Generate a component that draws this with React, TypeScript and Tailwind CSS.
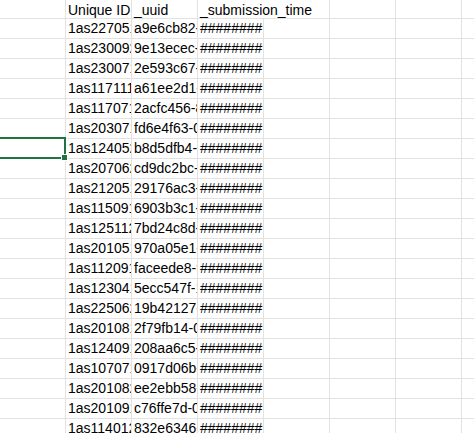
const rows: [string, string][] = [
  ["1as227051a", "a9e6cb82-4f1d"],
  ["1as230092a", "9e13ecec-7b21"],
  ["1as230071b", "2e593c67-1a0e"],
  ["1as117111a", "a61ee2d1-5c3b"],
  ["1as117071c", "2acfc456-8e90"],
  ["1as203071a", "fd6e4f63-0d2a"],
  ["1as124052b", "b8d5dfb4-3f17"],
  ["1as207062a", "cd9dc2bc-9e44"],
  ["1as212051a", "29176ac3-6b08"],
  ["1as115091b", "6903b3c1-2d55"],
  ["1as125112a", "7bd24c8d-4a19"],
  ["1as201051c", "970a05e1-8c6f"],
  ["1as112091a", "faceede8-9d02"],
  ["1as123041b", "5ecc547f-1e3a"],
  ["1as225062a", "19b42127-7f80"],
  ["1as201081a", "2f79fb14-0c2e"],
  ["1as124091b", "208aa6c5-5b71"],
  ["1as107071a", "0917d06b-3e9c"],
  ["1as201082c", "ee2ebb58-6a14"],
  ["1as201091a", "c76ffe7d-0b33"],
  ["1as114012a", "832e6346-2f5d"],
];

const cell = "w-[66px] shrink-0 overflow-hidden whitespace-nowrap border-r border-[#e2e2e2] pl-[2px]";

export default function App() {
  return (
    <div
      className="relative h-[433px] w-[474px] overflow-hidden bg-white text-[14px] text-black"
      style={{ fontFamily: '"Liberation Sans", Arial, sans-serif' }}
    >
      {/* header row */}
      <div className="flex h-[19px] border-b border-[#e2e2e2] leading-[18px]">
        <div className={cell} />
        <div className={`${cell} pt-[1px]`}>Unique ID</div>
        <div className={`${cell} pt-[1px]`}>_uuid</div>
        <div className="w-[132px] shrink-0 overflow-hidden whitespace-nowrap border-r border-[#e2e2e2] pl-[2px] pt-[1px]">
          _submission_time
        </div>
        <div className={cell} />
        <div className={cell} />
        <div className={cell} />
      </div>

      {rows.map(([id, uuid], i) => (
        <div key={i} className="flex h-5 border-b border-[#e2e2e2] leading-[19px]">
          <div className={cell} />
          <div className={cell}>{id}</div>
          <div className={cell}>{uuid}</div>
          <div className={cell}>########</div>
          <div className={cell} />
          <div className={cell} />
          <div className={cell} />
          <div className={cell} />
        </div>
      ))}

      {/* active cell */}
      <div className="absolute left-[-4px] top-[137px] h-[22px] w-[70px] border-2 border-[#217346]" />
      <div className="absolute left-[62px] top-[155px] h-[5px] w-[5px] bg-[#217346] outline outline-1 outline-white" />
    </div>
  );
}
